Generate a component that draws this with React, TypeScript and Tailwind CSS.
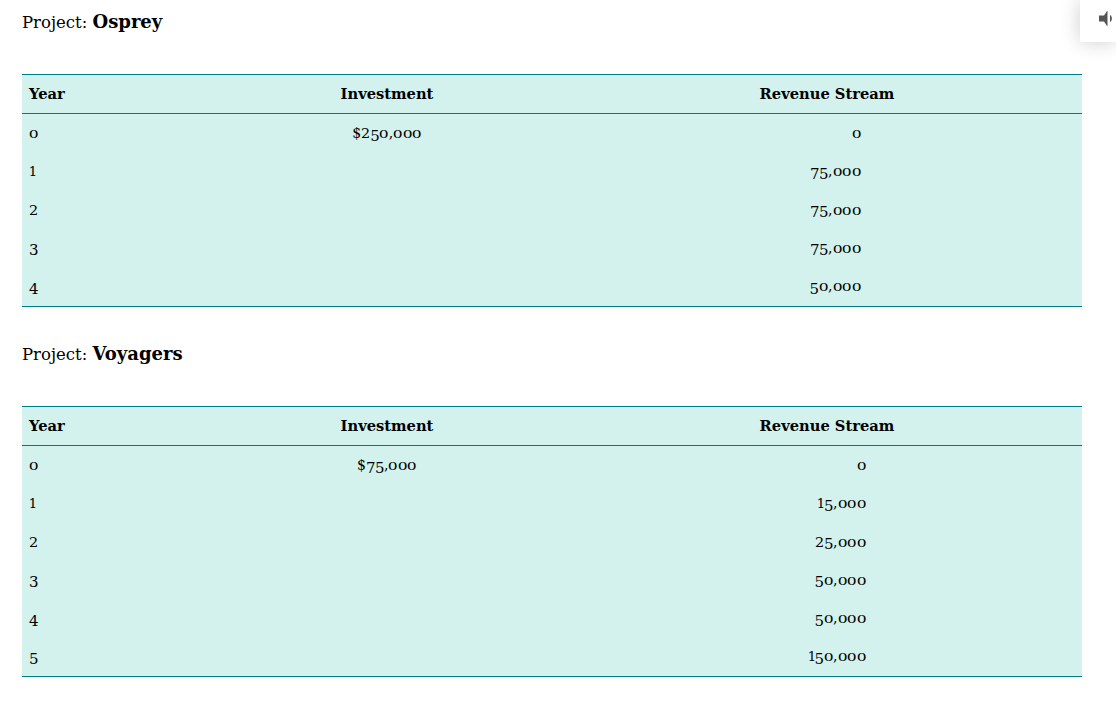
const SERIF = "font-['DejaVu_Serif','Liberation_Serif',serif]";

type Row = { year: string; investment?: string; revenue: string };

const OSPREY: Row[] = [
  { year: "0", investment: "$250,000", revenue: "0" },
  { year: "1", revenue: "75,000" },
  { year: "2", revenue: "75,000" },
  { year: "3", revenue: "75,000" },
  { year: "4", revenue: "50,000" },
];

const VOYAGERS: Row[] = [
  { year: "0", investment: "$75,000", revenue: "0" },
  { year: "1", revenue: "15,000" },
  { year: "2", revenue: "25,000" },
  { year: "3", revenue: "50,000" },
  { year: "4", revenue: "50,000" },
  { year: "5", revenue: "150,000" },
];

const DROP = "inline-block w-[9px] text-center align-[-2.5px] text-[15px] leading-[0]";

const DIGIT: Record<string, string> = {
  "0": "inline-block w-[9.5px] scale-x-[1.35] text-center text-[11.5px] leading-[0]",
  "1": "inline-block w-[7px] scale-x-[1.1] text-center text-[12px] leading-[0]",
  "2": "inline-block w-[9px] scale-x-[1.2] text-center text-[12px] leading-[0]",
  "3": DROP,
  "4": DROP,
  "5": DROP,
  "7": DROP,
};

// the reference font has old-style figures, none of the installed serifs do
function Figures({ value }: { value: string }) {
  return (
    <>
      {value.split("").map((ch, i) => (
        <span key={i} className={DIGIT[ch]}>{ch}</span>
      ))}
    </>
  );
}

function ProjectTable({ rows, revenueClass }: { rows: Row[]; revenueClass: string }) {
  return (
    <table className="w-full table-fixed border-collapse bg-[#d3f2ed] text-black">
      <thead>
        <tr className="h-[39px] border-y border-[#007a87] text-[14.7px] font-bold">
          <th className="w-[180px] px-[7px] text-left font-bold">Year</th>
          <th className="w-[370px] text-center font-bold">Investment</th>
          <th className="text-center font-bold">Revenue Stream</th>
        </tr>
      </thead>
      <tbody className="border-b border-[#007a87] text-[14px] leading-[20px]">
        {rows.map((r) => (
          <tr key={r.year} className="h-[38.3px] last:h-[39.8px]">
            <td className="px-[7px] pt-[9.45px] align-top"><Figures value={r.year} /></td>
            <td className="pt-[9.45px] text-center align-top">{r.investment && <Figures value={r.investment} />}</td>
            <td className={`pt-[9.45px] text-right align-top ${revenueClass}`}><Figures value={r.revenue} /></td>
          </tr>
        ))}
      </tbody>
    </table>
  );
}

function ProjectTitle({ name, className }: { name: string; className: string }) {
  return (
    <p className={`text-[16.5px] leading-[26px] text-black ${className}`}>
      Project: <b className="text-[18px] leading-[0] font-bold">{name}</b>
    </p>
  );
}

export default function App() {
  return (
    <div className={`relative h-[706px] overflow-hidden bg-white pl-[22px] pr-[34px] ${SERIF}`}>
      <ProjectTitle name="Osprey" className="pt-[10px]" />
      <div className="mt-[38px]">
        <ProjectTable rows={OSPREY} revenueClass="pr-[221px]" />
      </div>
      <ProjectTitle name="Voyagers" className="mt-[35px]" />
      <div className="mt-[38px]">
        <ProjectTable rows={VOYAGERS} revenueClass="pr-[216px]" />
      </div>

      <div className="absolute right-0 top-0 flex h-[42px] w-[36px] items-start justify-end bg-white pr-[2px] pt-[10px] shadow-[0_0_20px_rgba(0,0,0,0.2)]">
        <svg width="16" height="18" viewBox="0 0 16 18" fill="#555">
          <path d="M1 5.5h5L9 1h.5v15H9L6 11.5H1z" />
          <path d="M12 5c2.5 1 2.5 6 0 7z" />
        </svg>
      </div>
    </div>
  );
}
